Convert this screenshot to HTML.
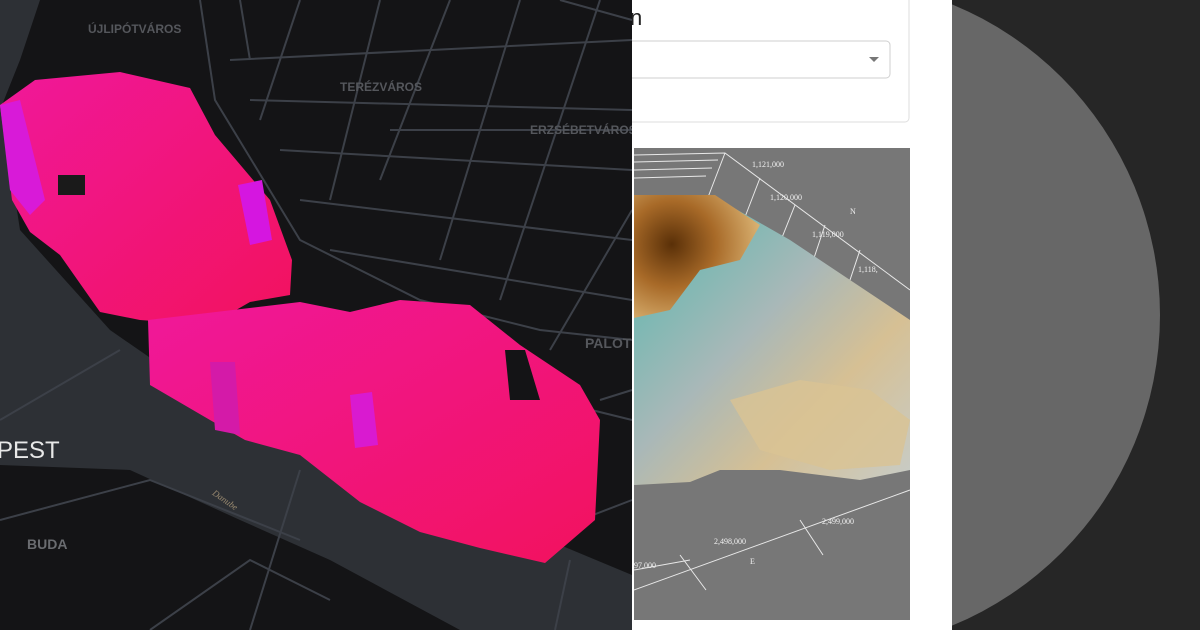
<!DOCTYPE html>
<html><head><style>
html,body{margin:0;padding:0;width:1200px;height:630px;overflow:hidden;background:#262626}
svg{position:absolute;left:0;top:0}
</style></head><body>
<svg width="1200" height="630" viewBox="0 0 1200 630" xmlns="http://www.w3.org/2000/svg">
<defs>
<linearGradient id="pk" x1="0" y1="0" x2="1" y2="1">
<stop offset="0" stop-color="#f0189a"/><stop offset="1" stop-color="#f2125e"/></linearGradient>
<linearGradient id="ter" x1="0" y1="0" x2="1" y2="1">
<stop offset="0" stop-color="#4fb8ae"/><stop offset="0.45" stop-color="#a9b8b8"/><stop offset="0.7" stop-color="#d6c094"/><stop offset="1" stop-color="#c7ccc8"/></linearGradient>
<radialGradient id="br" cx="0.3" cy="0.4" r="0.7"><stop offset="0" stop-color="#5a3008"/><stop offset="0.5" stop-color="#a86a28"/><stop offset="1" stop-color="#d8b070"/></radialGradient>
<clipPath id="mid"><rect x="632" y="0" width="320" height="630"/></clipPath>
<clipPath id="rt"><rect x="952" y="0" width="248" height="630"/></clipPath>
</defs>
<!-- map -->
<rect x="0" y="0" width="632" height="630" fill="#141416"/>
<path d="M0,0 L40,0 L20,60 L0,110 Z" fill="#2d3035"/>
<path d="M0,100 L20,230 L110,330 L240,420 L400,490 L560,545 L632,575 L632,630 L460,630 L330,560 L240,520 L130,470 L0,465 Z" fill="#2d3035"/>
<g stroke="#3c4048" stroke-width="2" fill="none">
<path d="M200,0 L215,100 L300,240 L420,300 L540,330 L632,340"/>
<path d="M240,0 L250,60 M300,0 L260,120 M380,0 L330,200 M450,0 L380,180 M520,0 L440,260 M600,0 L500,300"/>
<path d="M230,60 L632,40 M250,100 L632,110 M280,150 L632,170 M300,200 L632,240 M330,250 L632,300"/>
<path d="M390,130 L632,130 M560,0 L632,20 M430,370 L632,420 M0,420 L120,350 M0,520 L150,480 L300,540 M150,630 L250,560 L330,600"/>
<path d="M550,350 L632,210 M600,400 L632,390 M580,520 L632,500 M300,470 L250,630 M570,560 L555,630"/>
</g>
<path d="M0,105 L35,80 L120,72 L190,88 L215,135 L270,200 L292,260 L290,295 L250,302 L210,325 L140,320 L100,312 L60,255 L30,232 L12,200 Z" fill="url(#pk)"/>
<path d="M0,105 L20,100 L45,200 L30,215 L10,190 Z" fill="#d81ad8"/>
<path d="M238,185 L262,180 L272,240 L250,245 Z" fill="#d516e0"/>
<path d="M148,320 L300,302 L350,312 L400,300 L470,305 L520,345 L580,385 L600,420 L595,520 L545,563 L480,548 L420,532 L360,502 L300,455 L245,440 L210,420 L150,385 Z" fill="url(#pk)"/>
<path d="M210,362 L235,362 L240,435 L215,430 Z" fill="#d41aa8"/>
<path d="M350,395 L372,392 L378,445 L355,448 Z" fill="#d91ad0"/>
<path d="M505,350 L525,350 L540,400 L510,400 Z" fill="#141416"/>
<path d="M58,175 L85,175 L85,195 L58,195 Z" fill="#1a1a1a"/>
<g font-family="Liberation Sans, sans-serif" font-weight="bold" fill="#55575c" font-size="12">
<text x="88" y="33">ÚJLIPÓTVÁROS</text><text x="340" y="91">TERÉZVÁROS</text>
<text x="530" y="134">ERZSÉBETVÁROS</text><text x="585" y="348" font-size="14">PALOT</text>
<text x="27" y="549" font-size="14" fill="#6a6c70">BUDA</text></g>
<text x="-3" y="458" font-family="Liberation Sans, sans-serif" font-size="24" fill="#e8e8e8">PEST</text>
<text x="210" y="500" font-family="Liberation Serif, serif" font-style="italic" font-size="9" fill="#9a8a70" transform="rotate(35 220 500)">Danube</text>
<!-- right -->
<g clip-path="url(#rt)">
<rect x="952" y="0" width="248" height="630" fill="#262626"/>
<circle cx="824" cy="315" r="336" fill="#676767"/>
</g>
<!-- middle -->
<g clip-path="url(#mid)">
<rect x="632" y="0" width="320" height="630" fill="#ffffff"/>
<rect x="600" y="-5" width="309" height="127" rx="4" fill="#fff" stroke="#dedede"/>
<text x="630" y="25" font-family="Liberation Sans, sans-serif" font-size="22" fill="#222">n</text>
<rect x="600" y="41" width="290" height="37" rx="4" fill="#fff" stroke="#cfcfcf"/>
<path d="M869,57 L879,57 L874,62 Z" fill="#777"/>
<rect x="634" y="148" width="276" height="472" fill="#777777"/>
<g stroke="#e8e8e8" stroke-width="1" fill="none">
<path d="M634,155 L725,153 L910,290 M634,162 L718,160 M634,170 L712,168 M634,178 L706,176 M725,153 L705,205 M760,178 L740,230 M795,205 L775,255 M825,225 L810,270 M860,250 L845,295"/>
<path d="M634,590 L910,490 M706,590 L680,555 M823,555 L800,520 M634,570 L690,560"/>
</g>
<path d="M634,195 L720,200 L790,240 L910,320 L910,470 L860,480 L780,470 L720,470 L690,482 L634,485 Z" fill="url(#ter)"/>
<path d="M634,195 L715,195 L760,225 L740,260 L700,270 L670,310 L634,318 Z" fill="url(#br)"/>
<path d="M730,400 L800,380 L870,390 L910,420 L900,465 L830,470 L760,450 Z" fill="#d9c394" opacity="0.8"/>
<g font-family="Liberation Serif, serif" font-size="8" fill="#f0f0f0">
<text x="752" y="167">1,121,000</text><text x="770" y="200">1,120,000</text>
<text x="850" y="214">N</text><text x="812" y="237">1,119,000</text><text x="858" y="272">1,118,</text>
<text x="822" y="524">2,499,000</text><text x="714" y="544">2,498,000</text><text x="750" y="564">E</text><text x="634" y="568">97,000</text></g>
</g>
</svg>
</body></html>
